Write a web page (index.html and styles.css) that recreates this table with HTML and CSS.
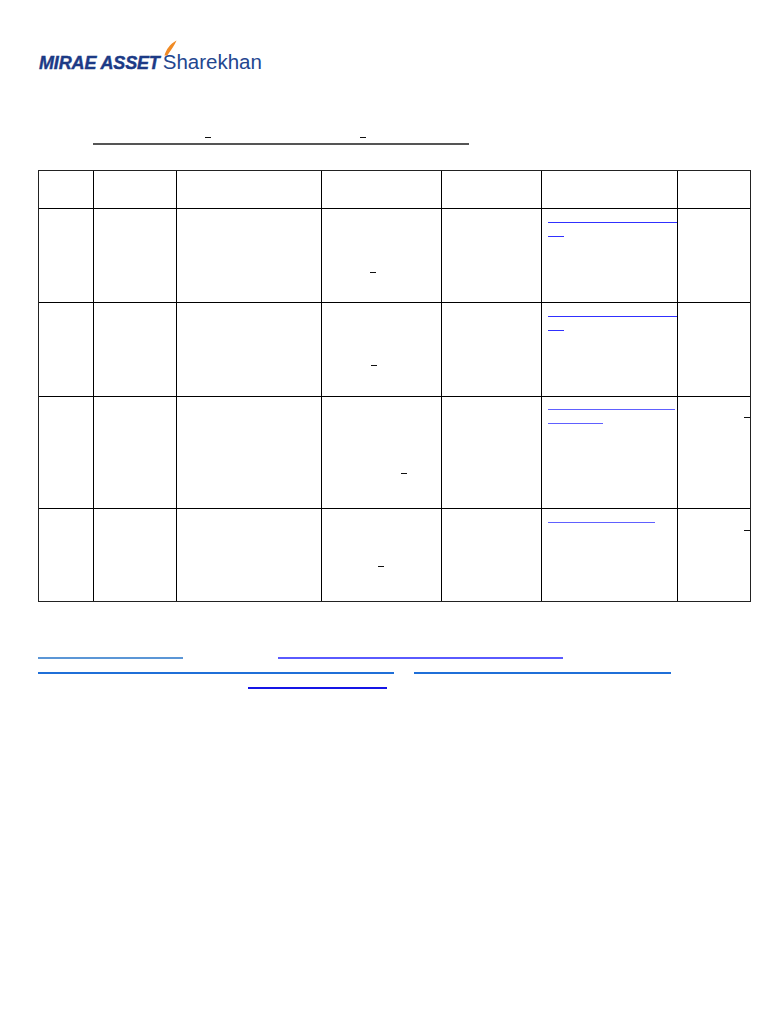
FILE: index.html
```html
<!DOCTYPE html>
<html lang="en">
<head>
<meta charset="utf-8">
<title>Mirae Asset Sharekhan</title>
<link rel="stylesheet" href="styles.css">
</head>
<body>
<div class="page">
  <header class="logo">
    <span class="mirae">MIRAE ASSET</span>
    <span class="share">
      <svg class="swoosh" width="13" height="16" viewBox="0 0 14 17" preserveAspectRatio="none" aria-hidden="true">
        <path d="M0.5 16.5 C2.5 10 6 4.5 13.5 0.5 C11.5 5.5 7.5 10.5 3.5 16.5 Z" fill="#f08a24"/>
      </svg>
      Sharekhan
    </span>
  </header>

  <div class="title">
    <span class="tdash tdash1"></span>
    <span class="tdash tdash2"></span>
  </div>

  <div class="grid">
    <div class="c"></div><div class="c"></div><div class="c"></div><div class="c"></div><div class="c"></div><div class="c"></div><div class="c"></div>

    <div class="c"></div><div class="c"></div><div class="c"></div>
    <div class="c"><span class="dash d1"></span></div>
    <div class="c"></div>
    <div class="c"><span class="ln lnA w129 mt13"></span><span class="ln lnA w16 mt13"></span></div>
    <div class="c"></div>

    <div class="c"></div><div class="c"></div><div class="c"></div>
    <div class="c"><span class="dash d2"></span></div>
    <div class="c"></div>
    <div class="c"><span class="ln lnA w129 mt13"></span><span class="ln lnA w16 mt13"></span></div>
    <div class="c"></div>

    <div class="c"></div><div class="c"></div><div class="c"></div>
    <div class="c"><span class="dash d3"></span></div>
    <div class="c"></div>
    <div class="c"><span class="ln lnB w127 mt12"></span><span class="ln lnB w55 mt13"></span></div>
    <div class="c"><span class="dash e1"></span></div>

    <div class="c"></div><div class="c"></div><div class="c"></div>
    <div class="c"><span class="dash d4"></span></div>
    <div class="c"></div>
    <div class="c"><span class="ln lnB w107 mt13"></span></div>
    <div class="c"><span class="dash e2"></span></div>
  </div>

  <footer class="foot">
    <div class="frow r1"><span class="fl fa"></span><span class="fl fb"></span></div>
    <div class="frow r2"><span class="fl fc"></span><span class="fl fd"></span></div>
    <div class="frow r3"><span class="fl fe"></span></div>
  </footer>
</div>
</body>
</html>
```

FILE: styles.css
```css
html, body {
  margin: 0;
  padding: 0;
  background: #fff;
}
body {
  font-family: "Liberation Sans", Arial, sans-serif;
  width: 768px;
  height: 1024px;
}
.page {
  padding: 40px 0 0 38px;
}
.logo {
  display: flex;
  align-items: flex-end;
  height: 32px;
  margin-left: 1px;
}
.mirae {
  font-weight: bold;
  font-style: italic;
  font-size: 18px;
  line-height: 18px;
  color: #1c3a86;
  letter-spacing: -0.15px;
  -webkit-text-stroke: 0.4px #1c3a86;
}
.share {
  position: relative;
  font-size: 20.5px;
  line-height: 20px;
  color: #23468f;
  margin-left: 3px;
}
.swoosh {
  position: absolute;
  left: 1px;
  top: -12px;
}
.title {
  position: relative;
  margin: 68px 0 0 55px;
  width: 376px;
  height: 3px;
  border-bottom: 2px solid #555;
}
.tdash {
  position: absolute;
  top: -3px;
  width: 6px;
  height: 1px;
  background: #111;
}
.tdash1 { left: 112px; }
.tdash2 { left: 267px; }

.grid {
  margin-top: 25px;
  display: grid;
  grid-template-columns: 54px 82px 144px 119px 99px 135px 72px;
  grid-template-rows: 37px 93px 93px 111px 92px;
  gap: 1px;
  background: #000;
  border: 1px solid #222;
  width: 711px;
}
.c {
  background: #fff;
  display: flex;
  flex-direction: column;
  align-items: flex-start;
}
.dash {
  display: block;
  width: 6px;
  height: 1px;
  background: #111;
}
.d1 { margin: 63px 0 0 48px; }
.d2 { margin: 62px 0 0 49px; }
.d3 { margin: 76px 0 0 79px; }
.d4 { margin: 57px 0 0 56px; }
.e1 { margin: 20px 0 0 66px; }
.e2 { margin: 21px 0 0 66px; }

.ln {
  display: block;
  height: 0;
  margin-left: 6px;
  border-top: 1px solid #3a3aff;
}
.lnA { border-top-color: #3030ff; }
.lnB { border-top-color: #6060ff; border-top-width: 1.5px; }
.w129 { width: 129px; }
.w127 { width: 127px; }
.w107 { width: 107px; }
.w55 { width: 55px; }
.w16 { width: 16px; }
.mt12 { margin-top: 12px; }
.mt13 { margin-top: 13px; }

.foot {
  margin-top: 55px;
}
.frow {
  display: flex;
  height: 1px;
}
.r2, .r3 { margin-top: 14px; }
.fl {
  display: block;
  height: 1px;
}
.fa { width: 145px; background: #5b96d6; height: 1.5px; }
.fb { width: 285px; margin-left: 95px; background: #5a5aff; height: 1.5px; }
.fc { width: 356px; background: #1f6fd8; height: 1.5px; }
.fd { width: 257px; margin-left: 20px; background: #1f6fd8; height: 1.5px; }
.fe { width: 139px; margin-left: 210px; background: #1515e6; height: 1.5px; }
```
